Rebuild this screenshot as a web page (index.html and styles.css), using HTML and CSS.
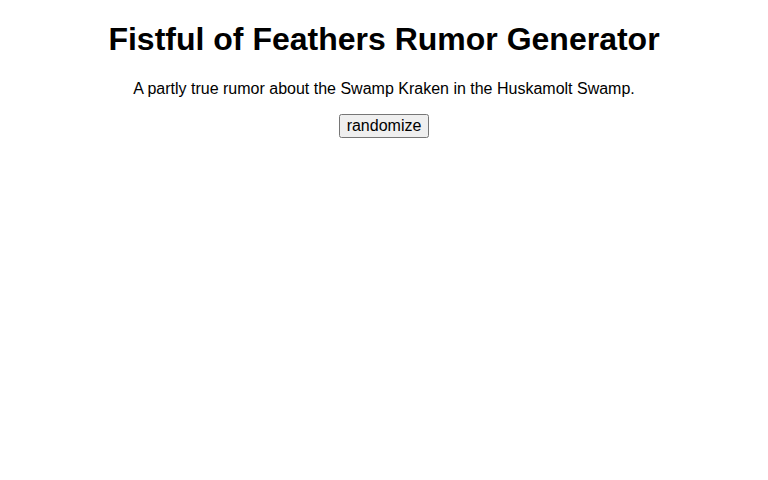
FILE: index.html
```html
<!DOCTYPE html>
<html lang="en">

<head>
    <meta charset="UTF-8">
    <meta name="viewport" content="width=device-width, initial-scale=1.0">
    <title>Fistful of Feathers Rumor Generator</title>
    <link rel="stylesheet" href="styles.css">
</head>

<body>
    <h1 class="title">Fistful of Feathers Rumor Generator</h1>
    <p class="rumor" id="rumor">A partly true rumor about the Swamp Kraken in the Huskamolt Swamp.</p>
    <button class="randomize" id="randomize">randomize</button>
</body>

</html>
```

FILE: styles.css
```css
body {
    font-family: "Liberation Sans", Arial, sans-serif;
    text-align: center;
    background-color: #fff;
    color: #000;
    margin: 0 8px;
}

.title {
    font-size: 32px;
}

.rumor {
    font-size: 16px;
}

.randomize {
    font-family: "Liberation Sans", Arial, sans-serif;
    font-size: 16px;
}
```
